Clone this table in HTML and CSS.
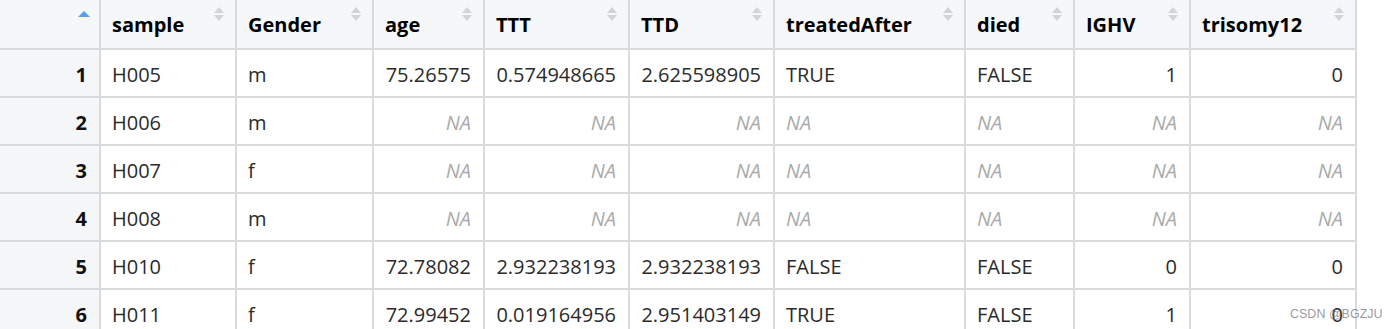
FILE: index.html
```html
<!DOCTYPE html>
<html>
<head>
<meta charset="utf-8">
<link rel="stylesheet" href="styles.css">
</head>
<body>
<div class="dt">
  <div class="row head">
    <div class="cell rn-head"><span class="asc"></span></div>
    <div class="cell th"><span>sample</span><span class="sort"></span></div>
    <div class="cell th"><span>Gender</span><span class="sort"></span></div>
    <div class="cell th"><span>age</span><span class="sort"></span></div>
    <div class="cell th"><span>TTT</span><span class="sort"></span></div>
    <div class="cell th"><span>TTD</span><span class="sort"></span></div>
    <div class="cell th"><span>treatedAfter</span><span class="sort"></span></div>
    <div class="cell th"><span>died</span><span class="sort"></span></div>
    <div class="cell th"><span>IGHV</span><span class="sort"></span></div>
    <div class="cell th"><span>trisomy12</span><span class="sort"></span></div>
  </div>
  <div class="row">
    <div class="cell rn">1</div>
    <div class="cell">H005</div>
    <div class="cell">m</div>
    <div class="cell num">75.26575</div>
    <div class="cell num">0.574948665</div>
    <div class="cell num">2.625598905</div>
    <div class="cell">TRUE</div>
    <div class="cell">FALSE</div>
    <div class="cell num">1</div>
    <div class="cell num">0</div>
  </div>
  <div class="row">
    <div class="cell rn">2</div>
    <div class="cell">H006</div>
    <div class="cell">m</div>
    <div class="cell num na">NA</div>
    <div class="cell num na">NA</div>
    <div class="cell num na">NA</div>
    <div class="cell na">NA</div>
    <div class="cell na">NA</div>
    <div class="cell num na">NA</div>
    <div class="cell num na">NA</div>
  </div>
  <div class="row">
    <div class="cell rn">3</div>
    <div class="cell">H007</div>
    <div class="cell">f</div>
    <div class="cell num na">NA</div>
    <div class="cell num na">NA</div>
    <div class="cell num na">NA</div>
    <div class="cell na">NA</div>
    <div class="cell na">NA</div>
    <div class="cell num na">NA</div>
    <div class="cell num na">NA</div>
  </div>
  <div class="row">
    <div class="cell rn">4</div>
    <div class="cell">H008</div>
    <div class="cell">m</div>
    <div class="cell num na">NA</div>
    <div class="cell num na">NA</div>
    <div class="cell num na">NA</div>
    <div class="cell na">NA</div>
    <div class="cell na">NA</div>
    <div class="cell num na">NA</div>
    <div class="cell num na">NA</div>
  </div>
  <div class="row">
    <div class="cell rn">5</div>
    <div class="cell">H010</div>
    <div class="cell">f</div>
    <div class="cell num">72.78082</div>
    <div class="cell num">2.932238193</div>
    <div class="cell num">2.932238193</div>
    <div class="cell">FALSE</div>
    <div class="cell">FALSE</div>
    <div class="cell num">0</div>
    <div class="cell num">0</div>
  </div>
  <div class="row">
    <div class="cell rn">6</div>
    <div class="cell">H011</div>
    <div class="cell">f</div>
    <div class="cell num">72.99452</div>
    <div class="cell num">0.019164956</div>
    <div class="cell num">2.951403149</div>
    <div class="cell">TRUE</div>
    <div class="cell">FALSE</div>
    <div class="cell num">1</div>
    <div class="cell num">0</div>
  </div>
</div>
<div class="watermark">CSDN @BGZJU</div>
</body>
</html>
```

FILE: styles.css
```css
html, body {
  margin: 0;
  padding: 0;
  background: #ffffff;
  overflow: hidden;
}
body {
  font-family: "Open Sans", "Noto Sans", "Liberation Sans", sans-serif;
  font-size: 20px;
  color: #2b2b2b;
  position: relative;
  height: 329px;
}
.dt {
  width: 1357px;
}
.row {
  display: grid;
  grid-template-columns: 101px 136px 137px 111px 145px 145px 191px 109px 116px 166px;
  height: 48px;
}
.row.head {
  height: 50px;
  background: #f6f7f9;
}
.cell {
  box-sizing: border-box;
  border-right: 2px solid #d8dbde;
  border-bottom: 2px solid #d8dbde;
  padding: 2px 11px 0 11px;
  display: flex;
  align-items: center;
  white-space: nowrap;
  overflow: hidden;
}
.cell.num {
  justify-content: flex-end;
  padding-right: 12px;
}
.cell.na {
  font-style: italic;
  color: #aaaaaa;
}
.cell.rn {
  background: #f4f6f8;
  justify-content: flex-end;
  font-weight: 700;
  color: #111111;
  padding-right: 12px;
}
.th {
  font-weight: 700;
  color: #000000;
  justify-content: space-between;
  padding-top: 0;
}
.rn-head {
  justify-content: flex-end;
  align-items: flex-start;
  padding-right: 9px;
  padding-top: 11px;
}
.asc {
  width: 0;
  height: 0;
  border-left: 6px solid transparent;
  border-right: 6px solid transparent;
  border-bottom: 6px solid #5b9ef0;
}
.sort {
  align-self: flex-start;
  margin-top: 7px;
  display: flex;
  flex-direction: column;
  gap: 2px;
  width: 10px;
  flex: none;
}
.sort::before {
  content: "";
  width: 0;
  height: 0;
  border-left: 5px solid transparent;
  border-right: 5px solid transparent;
  border-bottom: 6px solid #d2d4d6;
}
.sort::after {
  content: "";
  width: 0;
  height: 0;
  border-left: 5px solid transparent;
  border-right: 5px solid transparent;
  border-top: 6px solid #d2d4d6;
}
.watermark {
  position: absolute;
  left: 1290px;
  top: 307px;
  white-space: nowrap;
  font-family: "Liberation Sans", Arial, sans-serif;
  font-size: 12.5px;
  color: rgba(110, 110, 110, 0.7);
}
```
